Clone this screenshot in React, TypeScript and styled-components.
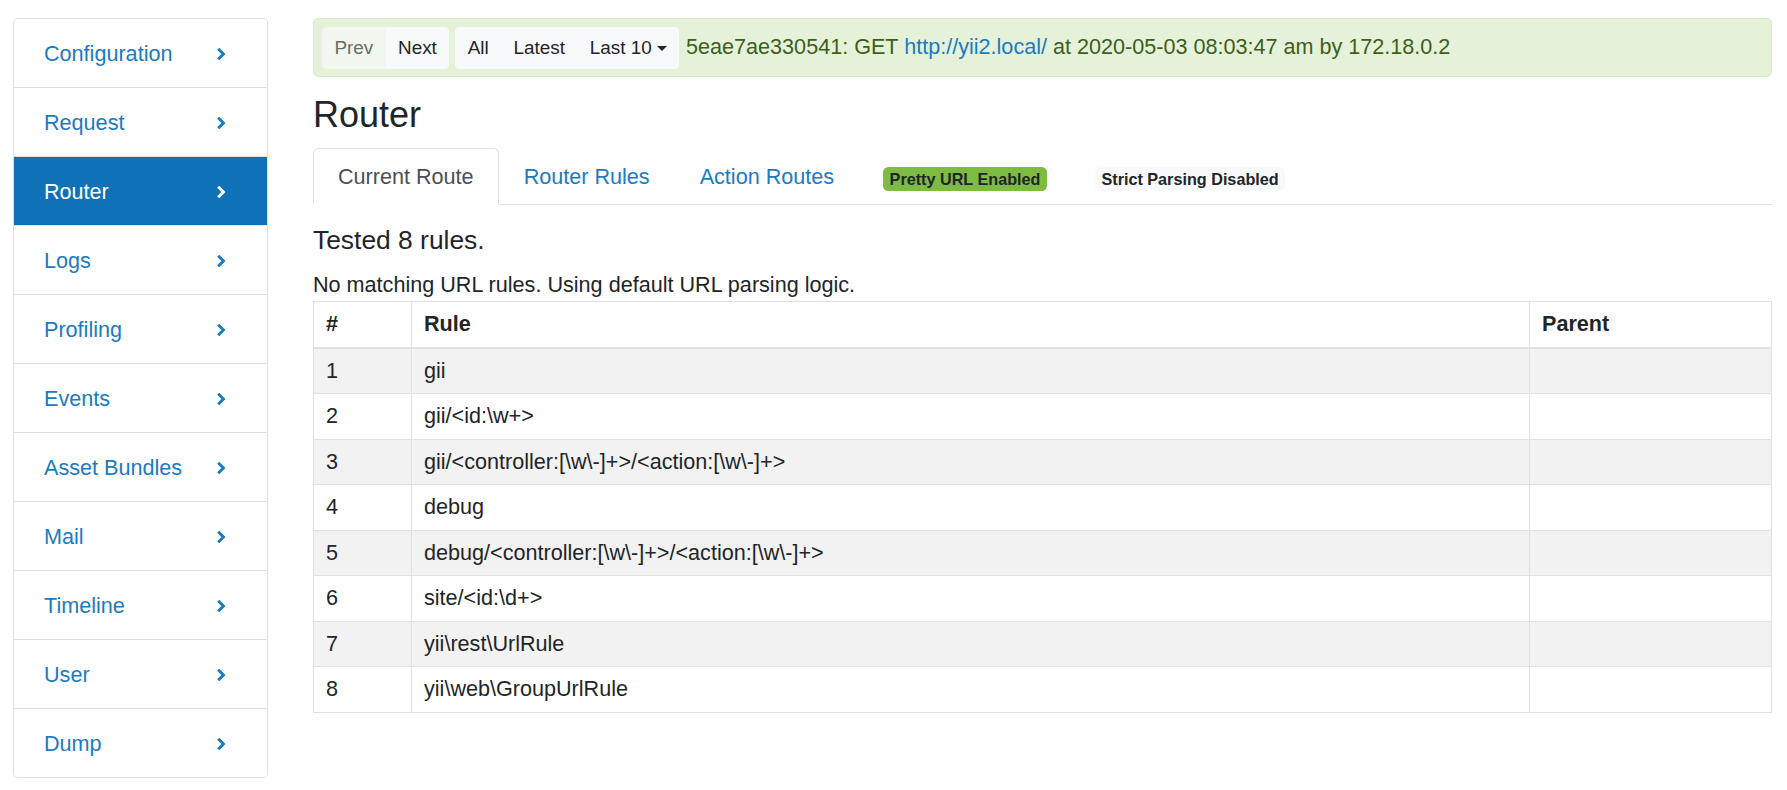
import styled, { createGlobalStyle } from "styled-components";

const GlobalStyle = createGlobalStyle`
  html, body {
    margin: 0;
    padding: 0;
    background: #fff;
  }
  body {
    font-family: "Liberation Sans", Arial, sans-serif;
    font-size: 21.6px;
    line-height: 1.5;
    color: #212529;
  }
  * {
    box-sizing: border-box;
  }
`;

const LINK = "#1a7bc3";
const BORDER = "#dee2e6";

const Page = styled.div`
  display: flex;
  align-items: flex-start;
  gap: 45px;
  padding: 18px 15px 0 13px;
`;

const Sidebar = styled.nav`
  flex: 0 0 255px;
  display: flex;
  flex-direction: column;
  border: 1px solid #dfdfdf;
  border-radius: 5px;
  overflow: hidden;
`;

const SideItem = styled.a<{ $active?: boolean }>`
  display: flex;
  align-items: center;
  justify-content: space-between;
  height: 69px;
  padding: 2px 41px 0 30px;
  border-top: 1px solid #dfdfdf;
  color: ${(p) => (p.$active ? "#fff" : LINK)};
  background: ${(p) => (p.$active ? "#0f72b9" : "#fff")};
  text-decoration: none;
  &:first-child {
    border-top: none;
    height: 68px;
  }
  svg {
    flex: 0 0 auto;
  }
`;

const Main = styled.main`
  flex: 1;
  min-width: 0;
`;

const Callout = styled.div`
  display: flex;
  align-items: center;
  height: 59px;
  padding: 0 8px;
  background: #e5f2d9;
  border: 1px solid #d8ebc9;
  border-radius: 5px;
  color: #3c6019;
  white-space: nowrap;
`;

const BtnGroup = styled.div`
  display: flex;
  margin-right: 6px;
`;

const Btn = styled.button<{ $disabled?: boolean }>`
  height: 42px;
  padding: 2px 11.4px 0;
  font-family: inherit;
  font-size: 18.9px;
  line-height: 1.5;
  color: #212529;
  background: #f8f9fa;
  border: 1px solid #f8f9fa;
  border-radius: 0;
  opacity: ${(p) => (p.$disabled ? 0.65 : 1)};
  display: flex;
  align-items: center;
  &:first-child {
    border-radius: 4.3px 0 0 4.3px;
  }
  &:last-child {
    border-radius: 0 4.3px 4.3px 0;
  }
`;

const Caret = styled.span`
  display: inline-block;
  margin-left: 5px;
  border-top: 5.7px solid #212529;
  border-left: 5.7px solid transparent;
  border-right: 5.7px solid transparent;
`;

const InfoText = styled.span`
  margin-left: 1px;
  a {
    color: ${LINK};
    text-decoration: none;
  }
`;

const Title = styled.h1`
  margin: 15.5px 0 12px;
  font-size: 36px;
  font-weight: 500;
  line-height: 43.2px;
`;

const Tabs = styled.div`
  display: flex;
  align-items: center;
  border-bottom: 1px solid ${BORDER};
`;

const Tab = styled.a<{ $active?: boolean }>`
  display: flex;
  align-items: center;
  height: 57px;
  padding: 2px 24px 0;
  margin-bottom: -1px;
  border: 1px solid transparent;
  border-radius: 5.4px 5.4px 0 0;
  color: ${(p) => (p.$active ? "#495057" : LINK)};
  text-decoration: none;
  ${(p) =>
    p.$active &&
    `border-color: ${BORDER} ${BORDER} #fff; background: #fff;`}
`;

const BadgeSlot = styled.div`
  display: flex;
  align-items: center;
  height: 56px;
  padding: 6px 24px 0;
`;

const Badge = styled.span<{ $tone: "green" | "light" }>`
  display: inline-block;
  padding: 4px 6.5px;
  font-size: 16.2px;
  font-weight: 700;
  line-height: 1;
  color: #212529;
  border-radius: 5.4px;
  background: ${(p) => (p.$tone === "green" ? "#7cbc40" : "#f8f9fa")};
`;

const SubTitle = styled.h3`
  margin: 20px 0 12.5px;
  font-size: 26.4px;
  font-weight: 500;
  line-height: 31.8px;
`;

const Note = styled.p`
  margin: 0;
  line-height: 31.5px;
`;

const Table = styled.table`
  width: 100%;
  border-collapse: collapse;
  border: 1px solid ${BORDER};
`;

const Th = styled.th<{ $w?: number }>`
  width: ${(p) => (p.$w ? `${p.$w}px` : "auto")};
  height: 47px;
  padding: 0 12px;
  text-align: left;
  font-weight: 700;
  border: 1px solid ${BORDER};
  border-bottom: 2px solid ${BORDER};
`;

const Row = styled.tr<{ $odd: boolean }>`
  background: ${(p) => (p.$odd ? "#f2f2f2" : "#fff")};
`;

const Td = styled.td`
  height: 45.5px;
  padding: 0 12px;
  border: 1px solid ${BORDER};
`;

const Chevron = ({ color }: { color: string }) => (
  <svg width="10" height="14" viewBox="0 0 10 14" aria-hidden="true">
    <path
      d="M2.2 1.8 L7.4 7 L2.2 12.2"
      fill="none"
      stroke={color}
      strokeWidth="3"
      strokeLinejoin="miter"
    />
  </svg>
);

const panels = [
  "Configuration",
  "Request",
  "Router",
  "Logs",
  "Profiling",
  "Events",
  "Asset Bundles",
  "Mail",
  "Timeline",
  "User",
  "Dump",
];

const rules = [
  "gii",
  "gii/<id:\\w+>",
  "gii/<controller:[\\w\\-]+>/<action:[\\w\\-]+>",
  "debug",
  "debug/<controller:[\\w\\-]+>/<action:[\\w\\-]+>",
  "site/<id:\\d+>",
  "yii\\rest\\UrlRule",
  "yii\\web\\GroupUrlRule",
];

export default function App() {
  return (
    <>
      <GlobalStyle />
      <Page>
        <Sidebar>
          {panels.map((name) => {
            const active = name === "Router";
            return (
              <SideItem key={name} href="#" $active={active}>
                <span>{name}</span>
                <Chevron color={active ? "#fff" : LINK} />
              </SideItem>
            );
          })}
        </Sidebar>
        <Main>
          <Callout>
            <BtnGroup>
              <Btn $disabled>Prev</Btn>
              <Btn>Next</Btn>
            </BtnGroup>
            <BtnGroup>
              <Btn>All</Btn>
              <Btn>Latest</Btn>
              <Btn>
                Last 10
                <Caret />
              </Btn>
            </BtnGroup>
            <InfoText>
              5eae7ae330541: GET <a href="#">http://yii2.local/</a> at 2020-05-03
              08:03:47 am by 172.18.0.2
            </InfoText>
          </Callout>
          <Title>Router</Title>
          <Tabs>
            <Tab href="#" $active>
              Current Route
            </Tab>
            <Tab href="#">Router Rules</Tab>
            <Tab href="#">Action Routes</Tab>
            <BadgeSlot>
              <Badge $tone="green">Pretty URL Enabled</Badge>
            </BadgeSlot>
            <BadgeSlot>
              <Badge $tone="light">Strict Parsing Disabled</Badge>
            </BadgeSlot>
          </Tabs>
          <SubTitle>Tested 8 rules.</SubTitle>
          <Note>No matching URL rules. Using default URL parsing logic.</Note>
          <Table>
            <thead>
              <tr>
                <Th $w={98}>#</Th>
                <Th>Rule</Th>
                <Th $w={242}>Parent</Th>
              </tr>
            </thead>
            <tbody>
              {rules.map((rule, i) => (
                <Row key={rule} $odd={i % 2 === 0}>
                  <Td>{i + 1}</Td>
                  <Td>{rule}</Td>
                  <Td></Td>
                </Row>
              ))}
            </tbody>
          </Table>
        </Main>
      </Page>
    </>
  );
}
